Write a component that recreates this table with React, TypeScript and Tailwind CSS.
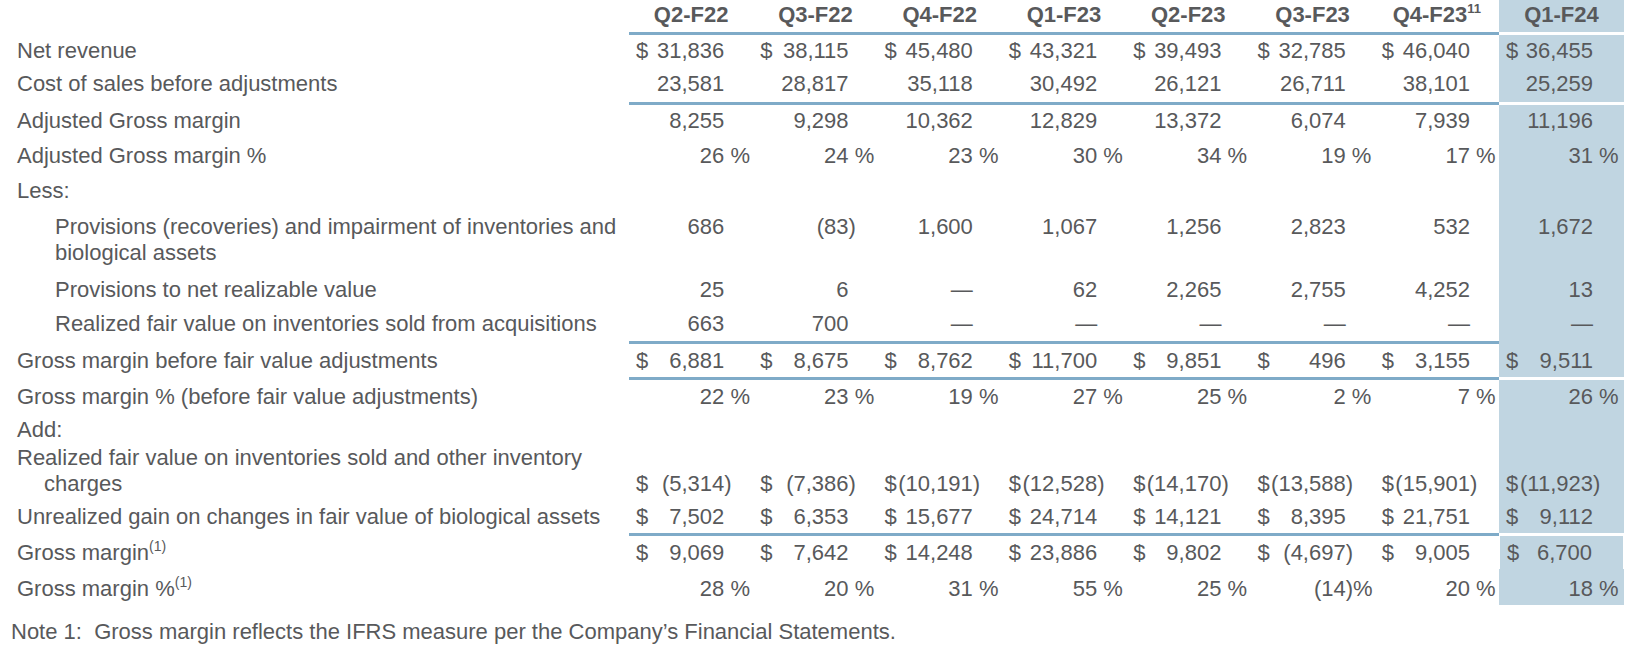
import type { ReactNode } from "react";

type Align = "center" | "top" | "bottom";

const alignCls: Record<Align, string> = {
  center: "items-center",
  top: "items-start pt-[7px]",
  bottom: "items-end pb-[4px]",
};

const GRID = "grid w-[1624px] grid-cols-[629px_repeat(7,minmax(0,1fr))_125px]";

function parse(v: string) {
  let d = false;
  let s = v;
  if (s.startsWith("$")) {
    d = true;
    s = s.slice(1).trim();
  }
  let suf = "";
  if (s.endsWith(")%")) {
    suf = ")%";
    s = s.slice(0, -2);
  } else if (s.endsWith(" %")) {
    suf = " %";
    s = s.slice(0, -2);
  } else if (s.endsWith(")")) {
    suf = ")";
    s = s.slice(0, -1);
  }
  return { d, n: s, suf };
}

function Value({
  v,
  last,
  boxed,
  align,
  shift,
}: {
  v: string;
  last: boolean;
  boxed?: boolean;
  align: Align;
  shift: string;
}) {
  const { d, n, suf } = parse(v);
  return (
    <div
      className={`flex ${alignCls[align]} ${shift} pl-[7px] ${last ? "bg-[#c0d5e1]" : ""} ${
        boxed ? "border-x border-white" : ""
      }`}
    >
      {d && <span>$</span>}
      <span className="flex-1 text-right whitespace-nowrap">{n}</span>
      <span className={`${last ? "w-[31px]" : "w-[29px]"} shrink-0 whitespace-pre`}>{suf}</span>
    </div>
  );
}

function Row({
  label,
  values,
  h,
  align = "center",
  indent = "pl-[17px]",
  boxed,
  shift = "",
}: {
  label: ReactNode;
  values?: string[];
  h: string;
  align?: Align;
  indent?: string;
  boxed?: boolean;
  shift?: string;
}) {
  return (
    <div className={`${GRID} ${h}`}>
      <div className={`flex ${alignCls[align]} ${shift} ${indent} whitespace-nowrap`}>{label}</div>
      {values
        ? values.map((v, i) => (
            <Value key={i} v={v} last={i === 7} boxed={boxed && i === 7} align={align} shift={shift} />
          ))
        : [0, 1, 2, 3, 4, 5, 6, 7].map((i) => (
            <div key={i} className={i === 7 ? "bg-[#c0d5e1]" : ""} />
          ))}
    </div>
  );
}

function Rule({ last = "white" }: { last?: "white" | "shade" }) {
  return (
    <div className={`${GRID} h-[3px]`}>
      <div />
      <div className="col-span-7 bg-[#7fabc8]" />
      <div className={last === "white" ? "bg-white" : "bg-[#c0d5e1]"} />
    </div>
  );
}

const headers = ["Q2-F22", "Q3-F22", "Q4-F22", "Q1-F23", "Q2-F23", "Q3-F23", "Q4-F23", "Q1-F24"];

export default function App() {
  return (
    <div className="w-[1645px] h-[648px] overflow-hidden bg-white font-['Liberation_Sans',Arial,sans-serif] text-[22px] leading-[26px] text-[#58595b]">
      {/* header */}
      <div className={`${GRID} h-[32px]`}>
        <div />
        {headers.map((q, i) => (
          <div
            key={q}
            className={`flex items-center justify-center pb-[2px] font-bold ${i === 7 ? "bg-[#c0d5e1]" : ""}`}
          >
            <span>
              {q}
              {q === "Q4-F23" && <sup className="text-[13px] top-[-9px]">11</sup>}
            </span>
          </div>
        ))}
      </div>
      <Rule />
      <Row
        h="h-[31px]"
        label="Net revenue"
        values={["$ 31,836", "$ 38,115", "$ 45,480", "$ 43,321", "$ 39,493", "$ 32,785", "$ 46,040", "$ 36,455"]}
      />
      <Row
        h="h-[36px]"
        label="Cost of sales before adjustments"
        values={["23,581", "28,817", "35,118", "30,492", "26,121", "26,711", "38,101", "25,259"]}
      />
      <Rule />
      <Row
        h="h-[32px]"
        label="Adjusted Gross margin"
        values={["8,255", "9,298", "10,362", "12,829", "13,372", "6,074", "7,939", "11,196"]}
      />
      <Row
        h="h-[37px]"
        label="Adjusted Gross margin %"
        values={["26 %", "24 %", "23 %", "30 %", "34 %", "19 %", "17 %", "31 %"]}
      />
      <Row h="h-[33px]" label="Less:" />
      <Row
        h="h-[66px]"
        align="top"
        indent="pl-[55px]"
        label={
          <div>
            Provisions (recoveries) and impairment of inventories and
            <br />
            biological assets
          </div>
        }
        values={["686", "(83)", "1,600", "1,067", "1,256", "2,823", "532", "1,672"]}
      />
      <Row
        h="h-[34px]"
        indent="pl-[55px]"
        label="Provisions to net realizable value"
        values={["25", "6", "—", "62", "2,265", "2,755", "4,252", "13"]}
      />
      <Row
        h="h-[34px]"
        indent="pl-[55px]"
        label="Realized fair value on inventories sold from acquisitions"
        values={["663", "700", "—", "—", "—", "—", "—", "—"]}
      />
      <Rule last="shade" />
      <Row
        h="h-[33px]"
        label="Gross margin before fair value adjustments"
        values={["$ 6,881", "$ 8,675", "$ 8,762", "$ 11,700", "$ 9,851", "$ 496", "$ 3,155", "$ 9,511"]}
      />
      <Rule />
      <Row
        h="h-[34px]"
        label="Gross margin % (before fair value adjustments)"
        values={["22 %", "23 %", "19 %", "27 %", "25 %", "2 %", "7 %", "26 %"]}
      />
      <Row h="h-[31px]" label="Add:" />
      <Row
        h="h-[56px]"
        align="bottom"
        label={
          <div>
            <div>Realized fair value on inventories sold and other inventory</div>
            <div className="pl-[27px]">charges</div>
          </div>
        }
        values={[
          "$ (5,314)",
          "$ (7,386)",
          "$(10,191)",
          "$(12,528)",
          "$(14,170)",
          "$(13,588)",
          "$(15,901)",
          "$(11,923)",
        ]}
      />
      <Row
        h="h-[32px]"
        label="Unrealized gain on changes in fair value of biological assets"
        values={["$ 7,502", "$ 6,353", "$ 15,677", "$ 24,714", "$ 14,121", "$ 8,395", "$ 21,751", "$ 9,112"]}
      />
      <Rule />
      <Row
        h="h-[33px]"
        boxed
        label={
          <span>
            Gross margin<sup className="text-[14px] top-[-9px]">(1)</sup>
          </span>
        }
        values={["$ 9,069", "$ 7,642", "$ 14,248", "$ 23,886", "$ 9,802", "$ (4,697)", "$ 9,005", "$ 6,700"]}
      />
      <Row
        h="h-[36px]"
        shift="pt-[3px]"
        label={
          <span>
            Gross margin %<sup className="text-[14px] top-[-9px]">(1)</sup>
          </span>
        }
        values={["28 %", "20 %", "31 %", "55 %", "25 %", "(14)%", "20 %", "18 %"]}
      />
      <div className="mt-[14px] pl-[11px] whitespace-pre">
        Note 1:  Gross margin reflects the IFRS measure per the Company’s Financial Statements.
      </div>
    </div>
  );
}
